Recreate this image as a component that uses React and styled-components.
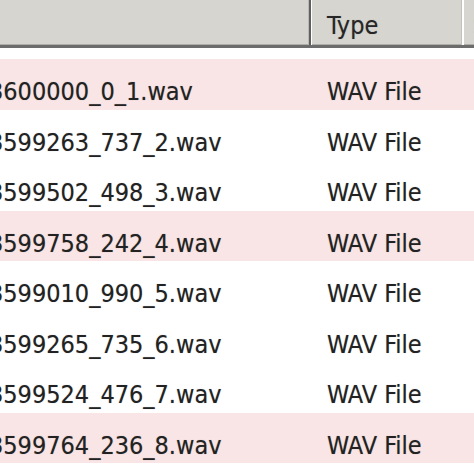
import styled, { createGlobalStyle } from "styled-components";

const GlobalStyle = createGlobalStyle`
  html, body {
    margin: 0;
    padding: 0;
    background: #ffffff;
    overflow: hidden;
  }
`;

const files = [
  { id: 1, name: "3600000_0_1.wav", hl: true },
  { id: 2, name: "3599263_737_2.wav", hl: false },
  { id: 3, name: "3599502_498_3.wav", hl: false },
  { id: 4, name: "3599758_242_4.wav", hl: true },
  { id: 5, name: "3599010_990_5.wav", hl: false },
  { id: 6, name: "3599265_735_6.wav", hl: false },
  { id: 7, name: "3599524_476_7.wav", hl: false },
  { id: 8, name: "3599764_236_8.wav", hl: true },
];

const Viewport = styled.div`
  width: 474px;
  height: 474px;
  overflow: hidden;
  font-family: "DejaVu Sans Condensed", "DejaVu Sans", sans-serif;
  font-size: 25px;
  color: #222222;
  text-shadow: 0 0 1px rgba(0, 0, 0, 0.3);
`;

const List = styled.div`
  margin-left: -40px;
  width: 560px;
`;

const Header = styled.div`
  display: grid;
  grid-template-columns: 351px 153px 1fr;
  height: 48px;
  box-sizing: border-box;
  background: #d6d5cf;
  border-bottom: 3px solid #6c6c6c;
  box-shadow: inset 0 -1px 0 #aeada8;
`;

const HeadCell = styled.div`
  box-sizing: border-box;
  padding-top: 13px;
  padding-left: ${(p) => p.pad || "15px"};
  line-height: 1;
  color: #262626;
  white-space: nowrap;
  border-left: ${(p) => (p.first ? "none" : "1px solid #ffffff")};
  border-right: ${(p) => p.edge || "none"};
  box-shadow: ${(p) => p.shade || "none"};
`;

const Rows = styled.div`
  padding-top: 11px;
`;

const Row = styled.div`
  display: grid;
  grid-template-columns: 350px 153px 1fr;
  height: 50.5px;
  background: ${(p) => (p.hl ? "#f9e5e5" : "#ffffff")};
`;

const Cell = styled.div`
  padding-top: 20px;
  padding-left: ${(p) => p.pad};
  line-height: 1;
  white-space: nowrap;
`;

export default function App() {
  return (
    <>
      <GlobalStyle />
      <Viewport>
        <List>
          <Header>
            <HeadCell first edge="2px solid #5f5f5f" shade="inset -1px 0 0 #b9b8b2" />
            <HeadCell edge="2px solid #ffffff" shade="inset -1px 0 0 #c2c1bb">
              Type
            </HeadCell>
            <HeadCell first pad="9px">
              Size
            </HeadCell>
          </Header>
          <Rows>
            {files.map((f) => (
              <Row key={f.id} hl={f.hl}>
                <Cell pad="29px">{f.name}</Cell>
                <Cell pad="17px">WAV File</Cell>
                <Cell />
              </Row>
            ))}
          </Rows>
        </List>
      </Viewport>
    </>
  );
}
